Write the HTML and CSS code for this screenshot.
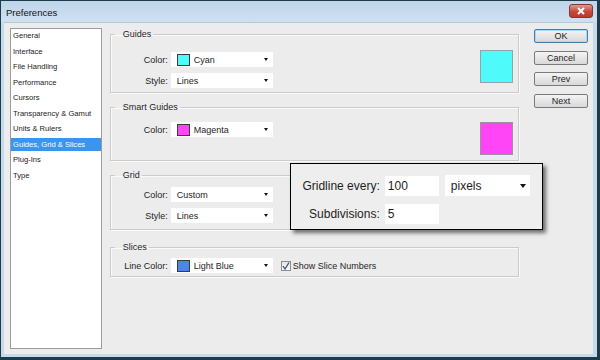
FILE: index.html
```html
<!DOCTYPE html>
<html lang="en">
<head>
  <meta charset="UTF-8" />
  <title>Preferences</title>
  <link rel="stylesheet" href="styles.css">
</head>
<body>
  <div class="window">
    <div class="titlebar">
      <span class="title">Preferences</span>
      <span class="close">
        <svg width="10" height="8" viewBox="0 0 10 8"><path d="M2 1 L8 7 M8 1 L2 7" stroke="#fff" stroke-width="2"/></svg>
      </span>
    </div>
    <div class="client">
      <ul class="nav">
        <li>General</li>
        <li>Interface</li>
        <li>File Handling</li>
        <li>Performance</li>
        <li>Cursors</li>
        <li>Transparency &amp; Gamut</li>
        <li>Units &amp; Rulers</li>
        <li class="active">Guides, Grid &amp; Slices</li>
        <li>Plug-Ins</li>
        <li>Type</li>
      </ul>

      <div class="panels">
        <fieldset class="group g-guides">
          <legend>Guides</legend>
          <div class="group-body">
            <div class="rows">
              <div class="row">
                <label>Color:</label>
                <div class="select"><span class="chip cyan"></span>Cyan<span class="caret"></span></div>
              </div>
              <div class="row">
                <label>Style:</label>
                <div class="select">Lines<span class="caret"></span></div>
              </div>
            </div>
            <div class="swatch cyan"></div>
          </div>
        </fieldset>

        <fieldset class="group g-smart">
          <legend>Smart Guides</legend>
          <div class="group-body">
            <div class="rows">
              <div class="row">
                <label>Color:</label>
                <div class="select"><span class="chip magenta"></span>Magenta<span class="caret"></span></div>
              </div>
            </div>
            <div class="swatch magenta"></div>
          </div>
        </fieldset>

        <fieldset class="group g-grid">
          <legend>Grid</legend>
          <div class="rows">
            <div class="row">
              <label>Color:</label>
              <div class="select">Custom<span class="caret"></span></div>
            </div>
            <div class="row">
              <label>Style:</label>
              <div class="select">Lines<span class="caret"></span></div>
            </div>
          </div>
        </fieldset>

        <fieldset class="group g-slices">
          <legend>Slices</legend>
          <div class="row">
            <label>Line Color:</label>
            <div class="select"><span class="chip blue"></span>Light Blue<span class="caret"></span></div>
            <span class="check">
              <svg width="8" height="8" viewBox="0 0 8 8"><path d="M1 4 L3 7 L7 0.5" fill="none" stroke="#3b4f86" stroke-width="1.3"/></svg>
            </span>
            <span class="check-label">Show Slice Numbers</span>
          </div>
        </fieldset>

        <!-- zoomed callout over the grid group -->
        <div class="callout">
          <div class="c-row">
            <span class="c-label">Gridline every:</span>
            <span class="c-input">100</span>
            <span class="c-select">pixels<span class="caret"></span></span>
          </div>
          <div class="c-row">
            <span class="c-label">Subdivisions:</span>
            <span class="c-input">5</span>
          </div>
        </div>
      </div>

      <div class="buttons">
        <button class="default">OK</button>
        <button>Cancel</button>
        <button>Prev</button>
        <button>Next</button>
      </div>
    </div>
  </div>
</body>
</html>
```

FILE: styles.css
```css
html, body {
  margin: 0;
  padding: 0;
}
body {
  width: 600px;
  height: 360px;
  overflow: hidden;
  font-family: "Liberation Sans", Arial, sans-serif;
  font-size: 9px;
  color: #1e1e1e;
}
.window {
  box-sizing: border-box;
  width: 600px;
  height: 360px;
  display: flex;
  flex-direction: column;
  background: #c6daee;
  border: 1px solid #1d3c4a;
  border-width: 1px 3px 3px 1px;
  padding: 0 4px 3px 3px;
}
.titlebar {
  height: 21px;
  display: flex;
  align-items: center;
  justify-content: space-between;
  background: linear-gradient(#c0d5ea, #cfe0f1);
  margin: 0 -4px 0 -3px;
  padding: 0 4px 0 5px;
}
.title {
  font-size: 9.5px;
  color: #111;
  padding-top: 1px;
}
.close {
  width: 22px;
  height: 12px;
  margin-top: -2px;
  display: flex;
  align-items: center;
  justify-content: center;
  background: linear-gradient(#e09a8e, #c8473a 55%, #b83a2e);
  border: 1px solid #7b3a33;
  border-radius: 3px;
}
.client {
  flex: 1;
  display: flex;
  background: #ececec;
  padding: 5px 5px 5px 6px;
  border-top: 1px solid #b4c6d8;
}

/* left list */
.nav {
  list-style: none;
  margin: 0;
  padding: 0;
  width: 90px;
  background: #fff;
  border: 1px solid #9c9c9c;
  font-size: 7.6px;
  color: #222;
}
.nav li {
  height: 15.5px;
  line-height: 14px;
  padding-left: 2px;
  white-space: nowrap;
}
.nav li.active {
  color: #fff;
  background: linear-gradient(#3b95ee, #3b95ee) 0 0.5px / 100% 13px no-repeat;
}

/* group boxes */
.panels {
  position: relative;
  width: 410px;
  margin-left: 8px;
  display: flex;
  flex-direction: column;
  gap: 8px;
}
.group {
  margin: 0;
  border: 1px solid #cbcbcb;
  box-shadow: 1px 1px 0 #fafafa, inset 1px 1px 0 #fafafa;
  padding: 9px 5px 4px 12px;
  min-width: 0;
}
.group legend {
  font-size: 9px;
  line-height: 12px;
  padding: 0 2px 0 8px;
  margin-left: -8px;
  color: #1e1e1e;
}
.group-body {
  display: flex;
  justify-content: space-between;
  align-items: flex-start;
}
.rows {
  display: flex;
  flex-direction: column;
  gap: 6px;
}
.g-guides .rows { padding-top: 3px; }
.g-guides .swatch { margin-top: 1px; }
.g-smart { padding-bottom: 5px; }
.g-grid { padding-top: 6px; padding-bottom: 6px; }
.g-slices { padding-top: 5px; padding-bottom: 3px; margin-top: 3px; }

.row {
  display: flex;
  align-items: center;
  height: 15px;
}
.row label {
  width: 45px;
  text-align: right;
  margin-right: 3px;
}
.select {
  position: relative;
  box-sizing: border-box;
  width: 102px;
  height: 15px;
  background: #fff;
  display: flex;
  align-items: center;
  padding-left: 6px;
}
.chip {
  width: 11px;
  height: 10px;
  border: 1px solid #3b3b3b;
  margin-right: 4px;
}
.caret {
  position: absolute;
  right: 5px;
  top: 6px;
  border-left: 2.5px solid transparent;
  border-right: 2.5px solid transparent;
  border-top: 3px solid #111;
}
.cyan { background: #4ffafa; }
.magenta { background: #ff45f5; }
.blue { background: #4b86ee; }

.swatch {
  box-sizing: border-box;
  width: 33px;
  height: 33px;
  border: 1px solid #8fa5a8;
}
.swatch.magenta { border-color: #a78aa8; }

.check {
  box-sizing: border-box;
  width: 10px;
  height: 10px;
  margin-left: 8px;
  border: 1px solid #8c8c8c;
  background: linear-gradient(#e6e6e6, #fafafa);
  display: flex;
  align-items: center;
  justify-content: center;
}
.check-label {
  margin-left: 2px;
}

/* zoomed callout */
.callout {
  position: absolute;
  left: 180px;
  top: 135px;
  box-sizing: border-box;
  width: 253px;
  height: 67px;
  background: #eeeeee;
  border: 1px solid #000;
  box-shadow: 3px 3px 4px rgba(0, 0, 0, 0.55);
  padding: 11px 0 0 0;
  display: flex;
  flex-direction: column;
  gap: 8px;
  font-size: 12px;
}
.c-row {
  display: flex;
  align-items: center;
}
.c-label {
  width: 89px;
  text-align: right;
  margin-right: 5px;
}
.c-input {
  box-sizing: border-box;
  width: 54px;
  height: 20px;
  background: #fff;
  padding: 3px 0 0 3px;
}
.c-select {
  position: relative;
  box-sizing: border-box;
  width: 85px;
  height: 21px;
  margin-left: 6px;
  background: #fff;
  padding: 4px 0 0 6px;
}
.c-select .caret {
  right: 4px;
  top: 9px;
  border-left-width: 3.5px;
  border-right-width: 3.5px;
  border-top-width: 4px;
}

/* buttons */
.buttons {
  margin-left: 15px;
  padding-top: 1px;
  display: flex;
  flex-direction: column;
  gap: 7.5px;
}
button {
  box-sizing: border-box;
  width: 54px;
  height: 14px;
  padding: 0;
  font-family: "Liberation Sans", Arial, sans-serif;
  font-size: 9px;
  color: #1e1e1e;
  background: linear-gradient(#f4f4f4, #e6e6e6 50%, #d9d9d9);
  border: 1px solid #7a7a7a;
  border-radius: 2px;
}
button.default {
  border-color: #3f7fae;
  box-shadow: inset 0 0 0 1px #a8d8f4;
}
```
